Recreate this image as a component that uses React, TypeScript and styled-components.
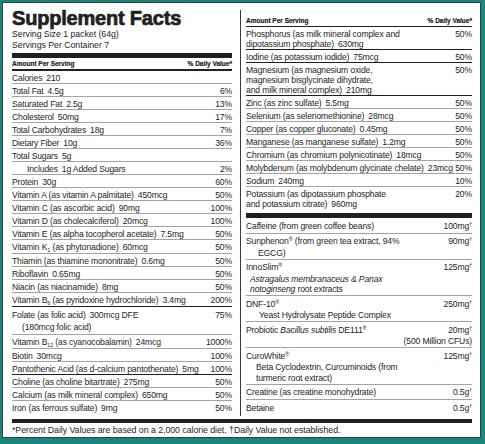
import React from 'react'
import styled, { createGlobalStyle } from 'styled-components'

const INK = '#231f20'
const RULE = '#a3a3a3'

const GlobalStyle = createGlobalStyle`
  html, body {
    margin: 0;
    padding: 0;
    background: #17877e;
  }
  body {
    font-family: 'Liberation Sans', Arial, sans-serif;
    color: ${INK};
  }
`

const Page = styled.div`
  width: 485px;
  height: 444px;
  box-sizing: border-box;
  padding: 2px 4px 6px 2px;
  background: #17877e;
`

const Panel = styled.div`
  height: 100%;
  box-sizing: border-box;
  background: #fff;
  border: 1px solid #3b3b3b;
  padding: 4px 8px 0 9px;
  display: flex;
  flex-direction: column;
`

const Columns = styled.div`
  display: flex;
  align-items: stretch;
`

const Column = styled.div<{ $width: number; $top?: number }>`
  width: ${p => p.$width}px;
  padding-top: ${p => p.$top || 0}px;
  display: flex;
  flex-direction: column;
`

const Divider = styled.div`
  width: 1px;
  background: #3b3b3b;
  margin: 3px 5px 0 8px;
`

const Title = styled.h1`
  margin: 0;
  font-size: 20px;
  line-height: 22px;
  font-weight: 700;
  letter-spacing: -0.2px;
  -webkit-text-stroke: 0.7px ${INK};
`

const Serving = styled.div`
  font-size: 8.8px;
  line-height: 11px;
  letter-spacing: -0.05px;
`

const HeavyBar = styled.div<{ $h: number; $mt?: number }>`
  height: ${p => p.$h}px;
  margin-top: ${p => p.$mt || 0}px;
  background: ${INK};
`

const HeaderRow = styled.div<{ $pt: number; $rule: number }>`
  display: flex;
  justify-content: space-between;
  font-size: 6.5px;
  font-weight: 700;
  line-height: 9px;
  padding: ${p => p.$pt}px 0 1px;
  border-bottom: ${p => p.$rule}px solid ${INK};
  -webkit-text-stroke: 0.2px ${INK};
`

type Rule = 'gray' | 'dark' | 'none'

const Row = styled.div<{ $rule?: Rule; $loose?: boolean; $lh?: number; $pb?: number }>`
  display: flex;
  justify-content: space-between;
  align-items: flex-start;
  font-size: 8.6px;
  letter-spacing: -0.15px;
  line-height: ${p => p.$lh || (p.$loose ? 10.5 : 10)}px;
  padding: ${p => (p.$loose ? '2.5px 0 0.5px' : `2px 0 ${p.$pb || 0}px`)};
  border-bottom: 1px solid
    ${p => (p.$rule === 'dark' ? INK : p.$rule === 'none' ? 'transparent' : RULE)};
`

const Label = styled.div`
  white-space: nowrap;
`

const Line = styled.div<{ $indent?: number }>`
  padding-left: ${p => p.$indent || 0}px;
`

const Amt = styled.span`
  margin-left: 4px;
`

const Value = styled.div`
  text-align: right;
  white-space: nowrap;
`

const Sub = styled.span`
  font-size: 5.5px;
  position: relative;
  top: 2px;
`

const Sup = styled.span`
  font-size: 5.5px;
  position: relative;
  top: -3px;
`

const Footnote = styled.div`
  font-size: 8.8px;
  line-height: 11px;
  padding-top: 2px;
  letter-spacing: -0.05px;
`

const Dagger = () => <Sup>†</Sup>
const Reg = () => <Sup>®</Sup>

type Simple = [React.ReactNode, string, string, Rule?]

const upperLeft: Simple[] = [
  ['Total Fat', '4.5g', '6%'],
  ['Saturated Fat', '2.5g', '13%'],
  ['Cholesterol', '50mg', '17%'],
  ['Total Carbohydrates', '18g', '7%'],
  ['Dietary Fiber', '10g', '36%'],
  ['Total Sugars', '5g', ''],
]

const vitamins: Simple[] = [
  ['Protein', '30g', '60%'],
  ['Vitamin A (as vitamin A palmitate)', '450mcg', '50%'],
  ['Vitamin C (as ascorbic acid)', '90mg', '100%'],
  ['Vitamin D (as cholecalciferol)', '20mcg', '100%'],
  ['Vitamin E (as alpha tocopherol acetate)', '7.5mg', '50%'],
  [<>Vitamin K<Sub>1</Sub> (as phytonadione)</>, '60mcg', '50%'],
  ['Thiamin (as thiamine mononitrate)', '0.6mg', '50%'],
  ['Riboflavin', '0.65mg', '50%'],
  ['Niacin (as niacinamide)', '8mg', '50%'],
  [<>Vitamin B<Sub>6</Sub> (as pyridoxine hydrochloride)</>, '3.4mg', '200%', 'dark'],
]

const lowerLeft: Simple[] = [
  [<>Vitamin B<Sub>12</Sub> (as cyanocobalamin)</>, '24mcg', '1000%'],
  ['Biotin', '30mcg', '100%'],
  ['Pantothenic Acid (as d-calcium pantothenate)', '5mg', '100%', 'dark'],
  ['Choline (as choline bitartrate)', '275mg', '50%'],
  ['Calcium (as milk mineral complex)', '650mg', '50%'],
  ['Iron (as ferrous sulfate)', '9mg', '50%', 'none'],
]

const minerals: Simple[] = [
  ['Zinc (as zinc sulfate)', '5.5mg', '50%'],
  ['Selenium (as selenomethionine)', '28mcg', '50%'],
  ['Copper (as copper gluconate)', '0.45mg', '50%'],
  ['Manganese (as manganese sulfate)', '1.2mg', '50%'],
  ['Chromium (as chromium polynicotinate)', '18mcg', '50%'],
  ['Molybdenum (as molybdenum glycinate chelate)', '23mcg', '50%'],
  ['Sodium', '240mg', '10%'],
]

function Simple({ row }: { row: Simple }) {
  const [label, amt, dv, rule] = row
  return (
    <Row $rule={rule || 'gray'}>
      <Label>
        {label}
        <Amt>{amt}</Amt>
      </Label>
      <Value>{dv}</Value>
    </Row>
  )
}

export default function App() {
  return (
    <Page>
      <GlobalStyle />
      <Panel>
        <Columns>
          <Column $width={220}>
            <Title>Supplement Facts</Title>
            <Serving>Serving Size 1 packet (64g)</Serving>
            <Serving>Servings Per Container 7</Serving>
            <HeavyBar $h={5} $mt={2} />
            <HeaderRow $pt={1} $rule={2}>
              <span>Amount Per Serving</span>
              <span>% Daily Value*</span>
            </HeaderRow>
            <Row>
              <Label>
                Calories<Amt>210</Amt>
              </Label>
            </Row>
            {upperLeft.map((r, i) => (
              <Simple key={'u' + i} row={r} />
            ))}
            <Row>
              <Label>
                <Line $indent={15}>
                  Includes<Amt>1g Added Sugars</Amt>
                </Line>
              </Label>
              <Value>2%</Value>
            </Row>
            {vitamins.map((r, i) => (
              <Simple key={'v' + i} row={r} />
            ))}
            <Row $lh={12} $pb={1}>
              <Label>
                <Line>
                  Folate (as folic acid)<Amt>300mcg DFE</Amt>
                </Line>
                <Line $indent={10}>(180mcg folic acid)</Line>
              </Label>
              <Value>75%</Value>
            </Row>
            {lowerLeft.map((r, i) => (
              <Simple key={'l' + i} row={r} />
            ))}
          </Column>

          <Divider />

          <Column $width={226} $top={9}>
            <HeaderRow $pt={0} $rule={1}>
              <span>Amount Per Serving</span>
              <span>% Daily Value*</span>
            </HeaderRow>
            <Row $rule="dark">
              <Label>
                <Line>Phosphorus (as milk mineral complex and</Line>
                <Line>
                  dipotassium phosphate)<Amt>630mg</Amt>
                </Line>
              </Label>
              <Value>50%</Value>
            </Row>
            <Row $rule="dark">
              <Label>
                Iodine (as potassium iodide)<Amt>75mcg</Amt>
              </Label>
              <Value>50%</Value>
            </Row>
            <Row $rule="dark">
              <Label>
                <Line>Magnesium (as magnesium oxide,</Line>
                <Line>magnesium bisglycinate dihydrate,</Line>
                <Line>
                  and milk mineral complex)<Amt>210mg</Amt>
                </Line>
              </Label>
              <Value>50%</Value>
            </Row>
            {minerals.map((r, i) => (
              <Simple key={'m' + i} row={r} />
            ))}
            <Row $rule="none">
              <Label>
                <Line>Potassium (as dipotassium phosphate</Line>
                <Line>
                  and potassium citrate)<Amt>960mg</Amt>
                </Line>
              </Label>
              <Value>20%</Value>
            </Row>
            <HeavyBar $h={5} $mt={3} />

            <Row $loose>
              <Label>Caffeine (from green coffee beans)</Label>
              <Value>
                100mg<Dagger />
              </Value>
            </Row>
            <Row $loose>
              <Label>
                <Line>
                  Sunphenon<Reg /> (from green tea extract, 94%
                </Line>
                <Line $indent={12}>EGCG)</Line>
              </Label>
              <Value>
                90mg<Dagger />
              </Value>
            </Row>
            <Row $loose>
              <Label>
                <Line>
                  InnoSlim<Reg />
                </Line>
                <Line $indent={4}>
                  <em>Astragalus membranaceus &amp; Panax</em>
                </Line>
                <Line $indent={4}>
                  <em>notoginseng</em> root extracts
                </Line>
              </Label>
              <Value>
                125mg<Dagger />
              </Value>
            </Row>
            <Row $loose>
              <Label>
                <Line>
                  DNF-10<Reg />
                </Line>
                <Line $indent={13}>Yeast Hydrolysate Peptide Complex</Line>
              </Label>
              <Value>
                250mg<Dagger />
              </Value>
            </Row>
            <Row $loose>
              <Label>
                Probiotic <em>Bacillus subtilis</em> DE111<Reg />
              </Label>
              <Value>
                <Line>
                  20mg<Dagger />
                </Line>
                <Line>(500 Million CFUs)</Line>
              </Value>
            </Row>
            <Row $loose>
              <Label>
                <Line>
                  CuroWhite<Reg />
                </Line>
                <Line $indent={10}>Beta Cyclodextrin, Curcuminoids (from</Line>
                <Line $indent={10}>turmeric root extract)</Line>
              </Label>
              <Value>
                125mg<Dagger />
              </Value>
            </Row>
            <Row $loose>
              <Label>Creatine (as creatine monohydrate)</Label>
              <Value>
                0.5g<Dagger />
              </Value>
            </Row>
            <Row $loose $rule="none">
              <Label>Betaine</Label>
              <Value>
                0.5g<Dagger />
              </Value>
            </Row>
          </Column>
        </Columns>
        <HeavyBar $h={4} $mt={3} />
        <Footnote>
          *Percent Daily Values are based on a 2,000 calorie diet. †Daily Value not established.
        </Footnote>
      </Panel>
    </Page>
  )
}
